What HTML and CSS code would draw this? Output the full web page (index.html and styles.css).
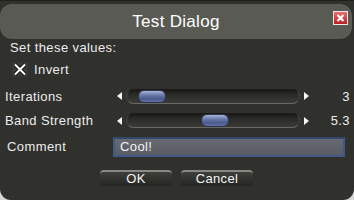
FILE: index.html
```html
<!DOCTYPE html>
<html lang="en">
<head>
  <meta charset="UTF-8" />
  <title>Test Dialog</title>
  <link rel="stylesheet" href="styles.css">
</head>
<body>

<div class="dialog">
  <!-- Title bar -->
  <div class="titlebar">
    <span></span>
    <span class="title">Test Dialog</span>
    <span class="close">
      <svg width="15" height="14" viewBox="0 0 15 14">
        <defs>
          <linearGradient id="cg" x1="0" y1="0" x2="0" y2="1">
            <stop offset="0" stop-color="#f07070"/>
            <stop offset="1" stop-color="#b81c22"/>
          </linearGradient>
        </defs>
        <rect x="0.5" y="0.5" width="14" height="13" fill="url(#cg)" stroke="#e8e8e8"/>
        <path d="M4.5 4 L10.5 10 M10.5 4 L4.5 10" stroke="#fff" stroke-width="2.2"/>
      </svg>
    </span>
  </div>

  <div class="content">
    <div class="row intro">Set these values:</div>

    <div class="row check-row">
      <svg class="check" width="16" height="15" viewBox="0 0 16 15">
        <rect x="0.5" y="0.5" width="15" height="14" fill="#3c3c38"/>
        <path d="M3 2.5 L13 12.5 M13 2.5 L3 12.5" stroke="#151513" stroke-width="4"/>
        <path d="M3 2.5 L13 12.5 M13 2.5 L3 12.5" stroke="#fff" stroke-width="2"/>
      </svg>
      <span>Invert</span>
    </div>

    <div class="row slider-row r3">
      <span class="label">Iterations</span>
      <span class="arrow left"></span>
      <div class="track"><div class="knob" style="margin-left: 11px"></div></div>
      <span class="arrow right"></span>
      <span class="value">3</span>
    </div>

    <div class="row slider-row r4">
      <span class="label">Band Strength</span>
      <span class="arrow left"></span>
      <div class="track"><div class="knob" style="margin-left: 74px"></div></div>
      <span class="arrow right"></span>
      <span class="value">5.3</span>
    </div>

    <div class="row comment-row">
      <span class="label">Comment</span>
      <div class="field">Cool!</div>
    </div>

    <div class="buttons">
      <button>OK</button>
      <button>Cancel</button>
    </div>
  </div>
</div>

</body>
</html>
```

FILE: styles.css
```css
* {
  box-sizing: border-box;
}
body {
  margin: 0;
  background: #d6d6d6;
  font-family: 'Liberation Sans', Arial, sans-serif;
  color: #ececec;
}
.dialog {
  width: 354px;
  height: 200px;
  background: #30302c;
  border-radius: 0 0 11px 11px;
  padding-top: 3px;
  border-top: 1px solid #1e1e1b;
  overflow: hidden;
}
.titlebar {
  height: 35px;
  margin-right: 2px;
  background: #595a54;
  border-radius: 12px;
  display: grid;
  grid-template-columns: 1fr auto 1fr;
  align-items: center;
  color: #ffffff;
}
.title {
  font-size: 17px;
  font-weight: normal;
  color: #ffffff;
  letter-spacing: 0.3px;
}
.close {
  justify-self: end;
  align-self: start;
  margin-top: 7px;
  margin-right: 4px;
  height: 14px;
}
.close svg {
  display: block;
}

.content {
  display: flex;
  flex-direction: column;
  font-size: 13px;
  letter-spacing: 0.4px;
}
.row {
  display: flex;
  align-items: center;
}
.intro {
  height: 16px;
  padding-left: 10px;
}
.check-row {
  height: 29px;
  padding-left: 12px;
}
.check {
  display: block;
  margin-right: 6px;
}
.slider-row {
  padding-left: 5px;
}
.r3 { height: 24px; }
.r4 { height: 25px; }
.slider-row .label {
  width: 112px;
}
.arrow {
  width: 0;
  height: 0;
  border-top: 4px solid transparent;
  border-bottom: 4px solid transparent;
}
.arrow.left {
  border-right: 5px solid #f4f4f4;
  margin-right: 4px;
}
.arrow.right {
  border-left: 5px solid #f4f4f4;
  margin-left: 4px;
}
.track {
  width: 174px;
  height: 15px;
  border-radius: 8px;
  background: linear-gradient(#1a1a18, #2c2c29 40%, #3a3a36);
  border: 1px solid #45453f;
  border-top-color: #1a1a18;
  border-bottom-color: #6a6a64;
  padding-top: 0;
}
.knob {
  width: 28px;
  height: 13px;
  border-radius: 6px;
  background: linear-gradient(#aab4d6, #6d7cb0 35%, #4c5a8e 70%, #6070a4);
  border: 1px solid #2c3350;
}
.value {
  flex: 1;
  text-align: right;
  padding-right: 4px;
}
.comment-row {
  height: 27px;
  padding-left: 7px;
}
.comment-row .label {
  width: 106px;
}
.field {
  width: 232px;
  height: 20px;
  background: linear-gradient(#676a72, #595c65);
  border: 2px solid #3e5888;
  border-top-color: #33466c;
  padding-left: 5px;
  line-height: 16px;
  font-size: 13px;
  color: #f4f4f4;
}
.buttons {
  display: flex;
  gap: 9px;
  padding-left: 100px;
  margin-top: 10px;
}
button {
  width: 72px;
  height: 16px;
  padding: 0;
  border: none;
  border-top: 2px solid #8a8a84;
  border-radius: 4px 4px 2px 2px;
  background: linear-gradient(#3e3e3a, #252522);
  color: #f4f4f4;
  font-family: 'Liberation Sans', Arial, sans-serif;
  font-size: 13px;
  line-height: 12px;
  letter-spacing: 0.3px;
}
```
